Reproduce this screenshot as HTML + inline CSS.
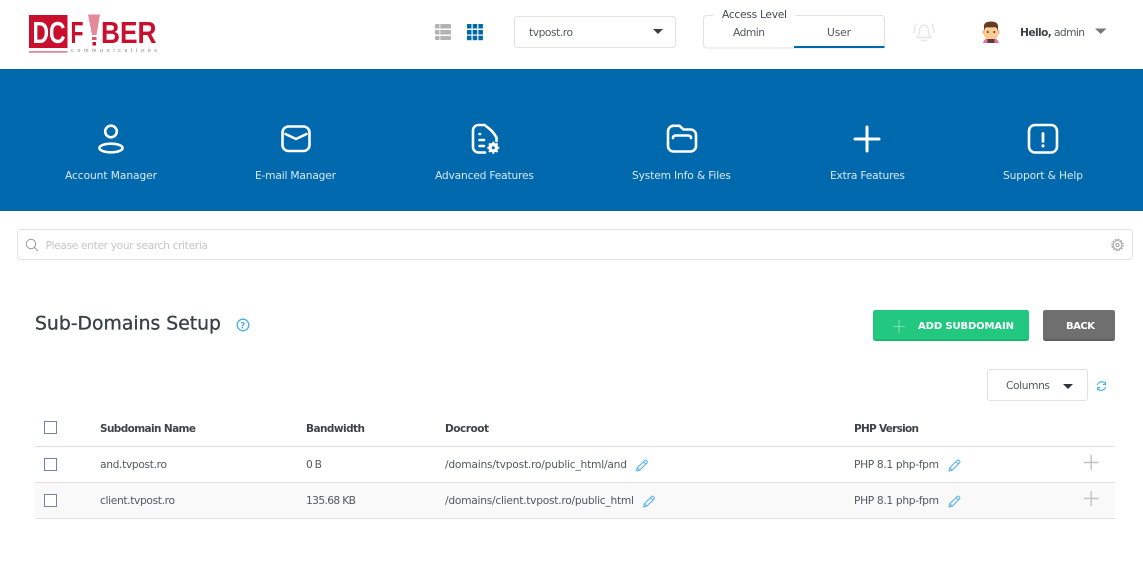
<!DOCTYPE html>
<html><head><meta charset="utf-8"><style>
html,body{margin:0;padding:0;background:#fff;width:1143px;height:564px;overflow:hidden}
svg{display:block}
text{font-family:"DejaVu Sans","Liberation Sans",sans-serif;font-size:10.7px;fill:#55595e}
.nav{fill:#d9e8f3}
.th{font-weight:bold;fill:#3f4348;font-size:10.5px}
.ic{fill:none;stroke:#fff;stroke-width:2.6;stroke-linecap:round;stroke-linejoin:round}
.pen{fill:none;stroke:#5fb4ef;stroke-width:1.1;stroke-linejoin:round}
</style></head><body>
<svg width="1143" height="564" viewBox="0 0 1143 564" xmlns="http://www.w3.org/2000/svg">
<rect width="1143" height="564" fill="#fff"/>
<!-- logo -->
<rect x="29" y="15" width="38.5" height="33" fill="#c8102e"/>
<rect x="29" y="51" width="38.5" height="1.8" fill="#e58a98"/>
<text x="32.5" y="43" textLength="33" lengthAdjust="spacingAndGlyphs" style="font-family:'Liberation Sans',sans-serif;font-size:31px;font-weight:bold;fill:#fff">DC</text>
<text x="70.5" y="43" textLength="13" lengthAdjust="spacingAndGlyphs" style="font-family:'Liberation Sans',sans-serif;font-size:31px;font-weight:bold;fill:#c8102e">F</text>
<path d="M88 14.500L100 14.500L96.500 35L92 35Z" fill="#e58a98"/>
<rect x="92" y="37" width="4.500" height="3" fill="#d9566c"/><rect x="92.500" y="42" width="3.500" height="3.500" fill="#c8102e"/>
<text x="101" y="43" textLength="55.500" lengthAdjust="spacingAndGlyphs" style="font-family:'Liberation Sans',sans-serif;font-size:31px;font-weight:bold;fill:#c8102e">BER</text>
<text x="71" y="52" textLength="86" style="font-family:'Liberation Sans',sans-serif;font-size:5px;font-weight:bold;fill:#a5a5a5">communications</text>
<!-- view toggles -->
<g fill="#b3b3b3"><rect x="435" y="24" width="16" height="4.500" rx="1"/><rect x="435" y="30" width="16" height="4.500" rx="1"/><rect x="435" y="36" width="16" height="4" rx="1"/></g>
<g fill="#fff"><rect x="439.500" y="24" width=".8" height="16"/></g>
<g fill="#0069ae"><rect x="467" y="24" width="4.500" height="4.500"/><rect x="472.700" y="24" width="4.500" height="4.500"/><rect x="478.400" y="24" width="4.500" height="4.500"/><rect x="467" y="30" width="4.500" height="4.500"/><rect x="472.700" y="30" width="4.500" height="4.500"/><rect x="478.400" y="30" width="4.500" height="4.500"/><rect x="467" y="35.700" width="4.500" height="4.500"/><rect x="472.700" y="35.700" width="4.500" height="4.500"/><rect x="478.400" y="35.700" width="4.500" height="4.500"/></g>
<!-- domain select -->
<rect x="514.500" y="16.500" width="161" height="31" rx="3" fill="#fff" stroke="#e2e2e2"/>
<text x="529" y="36" textLength="44">tvpost.ro</text>
<path d="M653 29H663L658 34Z" fill="#3a3d42"/>
<!-- access level -->
<rect x="703.500" y="15.500" width="181" height="32.500" rx="3" fill="#fff" stroke="#e2e2e2"/>
<rect x="713" y="10" width="82" height="10" fill="#fff"/>
<text x="722" y="18" textLength="65" style="fill:#45494e">Access Level</text>
<text x="733" y="36" textLength="32">Admin</text>
<text x="827" y="36" textLength="24">User</text>
<rect x="794" y="46" width="90.500" height="2" fill="#0069ae"/>
<!-- bell -->
<g fill="none" stroke="#e6e6e6" stroke-width="1.400" stroke-linecap="round" stroke-linejoin="round">
<path d="M917 37.500C919 35.500 919.500 34 919.500 31C919.500 27.500 921.500 25 924 25C926.500 25 928.500 27.500 928.500 31C928.500 34 929 35.500 931 37.500Z"/>
<path d="M921.500 40.500H926.500"/><path d="M916.500 24C914.500 26.500 914 29.500 914.500 32.500"/><path d="M931.500 24C933.500 26.500 934 29.500 933.500 32.500"/>
</g>
<!-- avatar -->
<path d="M983 43C984 39 987 38 991 38C995 38 998 39 999 43Z" fill="#e9709a"/>
<rect x="987.500" y="38" width="7" height="5" fill="#5a3a3a"/>
<rect x="984" y="28" width="14" height="11" rx="4" fill="#fbcb94"/>
<rect x="982.500" y="30" width="2" height="4" rx="1" fill="#f5b77c"/><rect x="997.500" y="30" width="2" height="4" rx="1" fill="#f5b77c"/>
<path d="M984 31V26C984 23 987 21.500 991 21.500C995 21.500 998 23 998 26V31C997 28 996 27 994 27.500H988C986 27 985 28 984 31Z" fill="#6a3a1f"/>
<rect x="987" y="31" width="1.500" height="2" fill="#5a3a2a"/><rect x="993.500" y="31" width="1.500" height="2" fill="#5a3a2a"/>
<!-- hello -->
<text x="1020" y="36" textLength="65"><tspan font-weight="bold" style="fill:#3f4348">Hello,</tspan> admin</text>
<path d="M1095 28.500H1106.500L1100.700 34Z" fill="#777"/>
<!-- banner -->
<rect x="0" y="69" width="1143" height="142" fill="#0069ae"/>
<g class="ic">
<circle cx="111" cy="131.500" r="5.800"/>
<ellipse cx="111" cy="148" rx="11.600" ry="4.300"/>
<rect x="282.500" y="126.500" width="27" height="24.500" rx="6"/>
<path d="M285.500 134L296 139L306.500 134"/>
<path d="M484.500 125H478.500A5.500 5.500 0 0 0 473 130.500V147A5.500 5.500 0 0 0 478.500 152.500H485M484.500 125C490 129 493.500 132 496.500 137.500V141"/>
<path d="M479.500 134H480M479.500 140H484M479.500 146H484"/>
<path d="M673.500 125.800H679.500L683.500 129.500H690.500A5.500 5.500 0 0 1 696 135V146A5.500 5.500 0 0 1 690.500 151.500H673.500A5.500 5.500 0 0 1 668 146V131.300A5.500 5.500 0 0 1 673.500 125.800Z"/>
<path d="M673 138C673 136.500 674 135.500 676 135.500H688C690 135.500 691 136.500 691 138"/>
<path d="M855 139H879M867 127V151" stroke-width="3"/>
<rect x="1029" y="125" width="28" height="27.500" rx="6"/>
<path d="M1043 133.500V141.500" stroke-width="2.800"/>
<path d="M1043 145.700V146" stroke-width="3"/>
</g>
<!-- small gear -->
<circle cx="493.300" cy="147.700" r="3.600" fill="none" stroke="#fff" stroke-width="2.600"/>
<path d="M493.300 141.700V153.700M487.300 147.700H499.300M489 143.400L497.600 152M497.600 143.400L489 152" stroke="#fff" stroke-width="2" fill="none"/>
<circle cx="493.300" cy="147.700" r="1.500" fill="#0069ae"/>
<text class="nav" x="65" y="179" textLength="92">Account Manager</text>
<text class="nav" x="255" y="179" textLength="81">E-mail Manager</text>
<text class="nav" x="435" y="179" textLength="99">Advanced Features</text>
<text class="nav" x="632" y="179" textLength="99">System Info &amp; Files</text>
<text class="nav" x="830" y="179" textLength="75">Extra Features</text>
<text class="nav" x="1003" y="179" textLength="80">Support &amp; Help</text>
<!-- search -->
<rect x="17.500" y="229.500" width="1115" height="30" rx="3" fill="#fff" stroke="#e2e2e2"/>
<circle cx="31" cy="244" r="4.700" fill="none" stroke="#9a9a9a" stroke-width="1"/>
<path d="M34.500 247.500L38 251" stroke="#9a9a9a" stroke-width="1"/>
<text x="45.500" y="249" textLength="162.500" style="fill:#c6c6c6">Please enter your search criteria</text>
<circle cx="1117.500" cy="245" r="1.600" fill="none" stroke="#9a9a9a" stroke-width=".9"/>
<circle cx="1117.500" cy="245" r="4.400" fill="none" stroke="#9a9a9a" stroke-width=".9"/>
<circle cx="1117.500" cy="245" r="5.600" fill="none" stroke="#9a9a9a" stroke-width="1" stroke-dasharray="1.800 1.130"/>
<!-- title -->
<text x="35" y="329.500" textLength="186" lengthAdjust="spacingAndGlyphs" style="font-size:19px;fill:#3b4046;stroke:#3b4046;stroke-width:.35">Sub-Domains Setup</text>
<circle cx="243" cy="325" r="5.800" fill="none" stroke="#46aef0" stroke-width="1.300"/>
<text x="240.300" y="328.300" style="font-size:8.500px;fill:#46aef0;font-weight:bold">?</text>
<!-- buttons -->
<rect x="873" y="310" width="156" height="31" rx="2.500" fill="#17b96f"/>
<rect x="873" y="310" width="156" height="29" rx="2.500" fill="#23c880"/>
<path d="M899 320V333M893 326.500H905" stroke="#7fe0b5" stroke-width="1"/>
<text x="918" y="329" textLength="96" style="font-size:10px;font-weight:bold;fill:#fff">ADD SUBDOMAIN</text>
<rect x="1043" y="310" width="72" height="31" rx="2.500" fill="#5f5f5f"/>
<rect x="1043" y="310" width="72" height="29" rx="2.500" fill="#6f6f6f"/>
<text x="1066" y="329" textLength="29" style="font-size:10px;font-weight:bold;fill:#fff">BACK</text>
<!-- columns -->
<rect x="987.500" y="369.500" width="100" height="31" rx="2.500" fill="#fff" stroke="#e2e2e2"/>
<text x="1006" y="389" textLength="44">Columns</text>
<path d="M1063 384H1073L1068 389Z" fill="#2f3236"/>
<path d="M1097.500 385A4.200 4.200 0 0 1 1105 383.500M1105.500 387A4.200 4.200 0 0 1 1098 388.500" fill="none" stroke="#46aef0" stroke-width="1.100"/>
<path d="M1105.600 381.500V384.500H1102.800M1097.400 390.500V387.500H1100.200" fill="none" stroke="#46aef0" stroke-width=".9"/>
<!-- table -->
<rect x="35" y="483" width="1080" height="35" fill="#f9f9f9"/>
<rect x="35" y="446" width="1080" height="1" fill="#e0e0e0"/>
<rect x="35" y="482" width="1080" height="1" fill="#e0e0e0"/>
<rect x="35" y="518" width="1080" height="1" fill="#e0e0e0"/>
<g fill="#fff" stroke="#75839e" stroke-width="1">
<rect x="44.500" y="421.500" width="12" height="12"/>
<rect x="44.500" y="458.500" width="12" height="12"/>
<rect x="44.500" y="494.500" width="12" height="12"/>
</g>
<text class="th" x="100" y="432" textLength="96">Subdomain Name</text>
<text class="th" x="306" y="432" textLength="59">Bandwidth</text>
<text class="th" x="445" y="432" textLength="44">Docroot</text>
<text class="th" x="854" y="432" textLength="65">PHP Version</text>
<text x="100" y="468" textLength="67">and.tvpost.ro</text>
<text x="306" y="468" textLength="16">0 B</text>
<text x="445" y="468" textLength="182">/domains/tvpost.ro/public_html/and</text>
<text x="854" y="468" textLength="85">PHP 8.1 php-fpm</text>
<text x="100" y="504" textLength="75">client.tvpost.ro</text>
<text x="306" y="504" textLength="50">135.68 KB</text>
<text x="445" y="504" textLength="189">/domains/client.tvpost.ro/public_html</text>
<text x="854" y="504" textLength="85">PHP 8.1 php-fpm</text>
<!-- pencils -->
<defs><path id="p" class="pen" d="M0 11L.8 7.800L8 .6C8.600 0 9.400 0 10 .6L10.500 1.100C11 1.700 11 2.400 10.500 3L3.200 10.200ZM.8 7.800L3.200 10.200M7 1.600L9.500 4.100"/></defs>
<use href="#p" x="636.500" y="460"/>
<use href="#p" x="643.500" y="496"/>
<use href="#p" x="949" y="460"/>
<use href="#p" x="949" y="496"/>
<!-- plus -->
<path d="M1084 462.500H1098.500M1091.200 455V470M1084 498.500H1098.500M1091.200 491V506" stroke="#c2c2c2" stroke-width="1.400" fill="none"/>
</svg>
</body></html>
